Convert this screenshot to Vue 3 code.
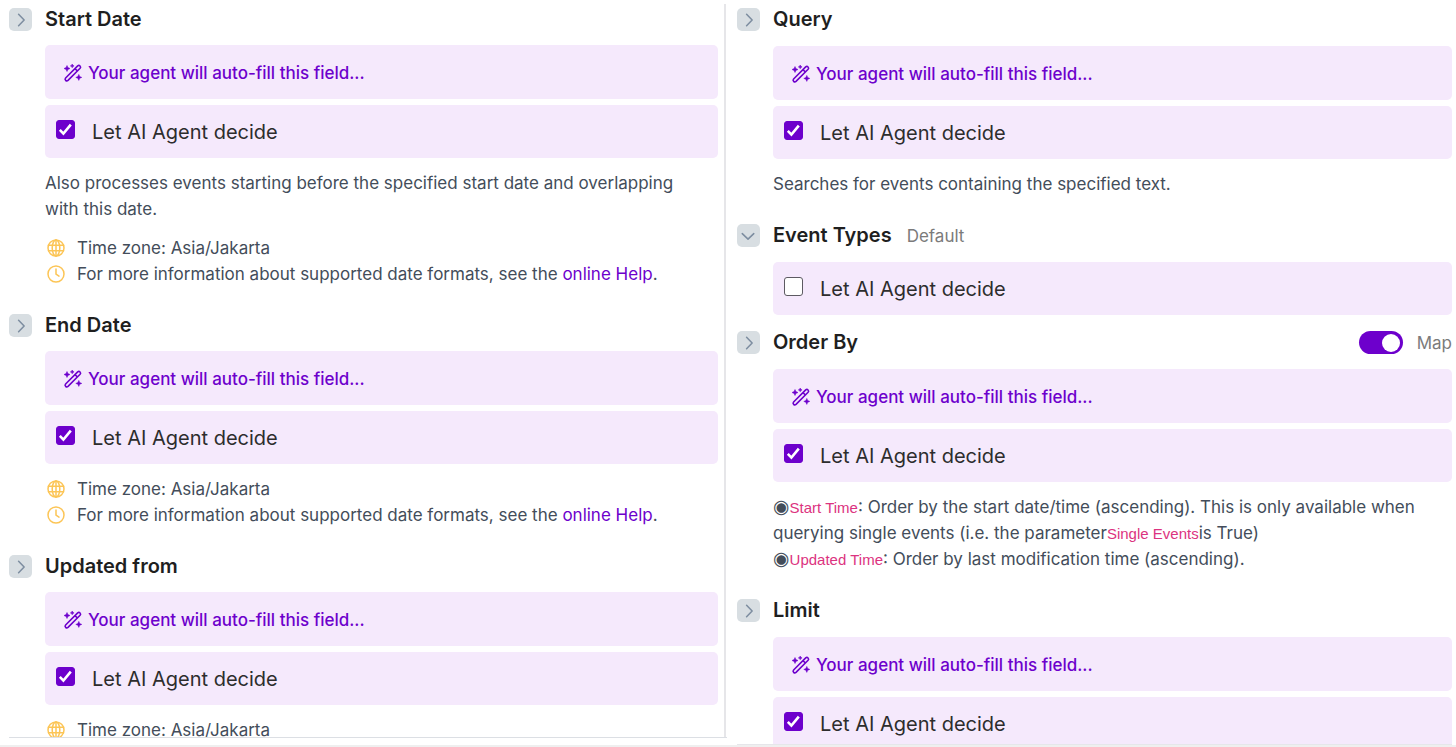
<template>
  <main class="page">
    <section v-for="column in columns" :key="column.id" :class="['column', `column-${column.id}`]">
      <div class="column-scroll">
        <article v-for="field in column.fields" :key="field.id" class="field">
          <header class="field-header">
            <button
              type="button"
              :class="['expander', { 'expander-open': field.open }]"
              :aria-label="`Toggle ${field.title}`"
              :aria-expanded="field.open"
              @click="field.open = !field.open"
            >
              <svg viewBox="0 0 24 24" aria-hidden="true">
                <path d="M10 6.5l5.8 6-5.8 6" />
              </svg>
            </button>
            <h2 class="field-title">{{ field.title }}</h2>
            <span v-if="field.badge" class="field-badge">{{ field.badge }}</span>
            <label v-if="field.mappable" class="map">
              <input v-model="field.mapped" type="checkbox" role="switch" class="switch" />
              <span>Map</span>
            </label>
          </header>

          <div class="field-body">
            <div v-if="field.agent" class="box autofill">
              <svg class="wand" viewBox="0 0 18 18" aria-hidden="true">
                <path
                  class="wand-stroke"
                  d="M1.600 14L13.700 1.900a1.700 1.700 0 0 1 2.400 2.400L4 16.400a1.700 1.700 0 0 1-2.400-2.400zM11 4.600l2.400 2.400"
                />
                <path
                  class="wand-spark"
                  d="M3 1.500l.9 2.100 2.100.9-2.100.9L3 7.500l-.9-2.100L0 4.500l2.100-.9zM8.200 0l.6 1.300 1.300.6-1.300.6-.6 1.300-.6-1.300-1.300-.6 1.300-.6zM14.800 10.400l.9 2.100 2.100.9-2.100.9-.9 2.100-.9-2.100-2.100-.9 2.100-.9z"
                />
              </svg>
              <span>Your agent will auto-fill this field...</span>
            </div>
            <label class="box decide">
              <input v-model="field.agent" type="checkbox" class="check" />
              <span>Let AI Agent decide</span>
            </label>

            <p v-if="field.help" class="help">{{ field.help }}</p>

            <ul v-if="field.dateHints" class="hints">
              <li>
                <svg viewBox="0 0 18 18" aria-hidden="true">
                  <circle cx="9" cy="9" r="8" />
                  <ellipse cx="9" cy="9" rx="3.8" ry="8" />
                  <path d="M1.5 6.3h15M1.5 11.7h15M9 1v16" />
                </svg>
                <span>Time zone: Asia/Jakarta</span>
              </li>
              <li>
                <svg viewBox="0 0 18 18" aria-hidden="true">
                  <circle cx="9" cy="9" r="8" />
                  <path d="M9 4v5.2l3 2" />
                </svg>
                <span>
                  For more information about supported date formats, see the
                  <a href="#help">online Help</a>.
                </span>
              </li>
            </ul>

            <p v-if="field.orderHelp" class="help">
              <span class="bullet">◉</span><code>Start Time</code>: Order by the start date/time
              (ascending). This is only available when querying single events (i.e. the
              parameter<code>Single Events</code>is True)<br />
              <span class="bullet">◉</span><code>Updated Time</code>: Order by last modification
              time (ascending).
            </p>
          </div>
        </article>
      </div>
    </section>
  </main>
</template>

<script setup>
import { reactive } from 'vue'

const columns = reactive([
  {
    id: 'dates',
    fields: [
      {
        id: 'start-date',
        title: 'Start Date',
        open: false,
        agent: true,
        help: 'Also processes events starting before the specified start date and overlapping with this date.',
        dateHints: true,
      },
      { id: 'end-date', title: 'End Date', open: false, agent: true, dateHints: true },
      { id: 'updated-from', title: 'Updated from', open: false, agent: true, dateHints: true },
    ],
  },
  {
    id: 'filters',
    fields: [
      {
        id: 'query',
        title: 'Query',
        open: false,
        agent: true,
        help: 'Searches for events containing the specified text.',
      },
      { id: 'event-types', title: 'Event Types', badge: 'Default', open: true, agent: false },
      {
        id: 'order-by',
        title: 'Order By',
        open: false,
        agent: true,
        mappable: true,
        mapped: true,
        orderHelp: true,
      },
      { id: 'limit', title: 'Limit', open: false, agent: true },
    ],
  },
])
</script>

<style>
body {
  margin: 0;
  background: #ffffff;
}
</style>

<style scoped>
.page {
  --purple: #6d00cc;
  --purple-soft: #f5e9fc;
  --text: #434d5a;
  box-sizing: border-box;
  display: grid;
  grid-template-columns: 1fr 1fr;
  height: 100vh;
  overflow: hidden;
  border-bottom: 2px solid #efefef;
  font-family: Inter, 'Liberation Sans', sans-serif;
  font-size: 17px;
  line-height: 26px;
  color: var(--text);
}

.column {
  display: flex;
  min-width: 0;
  min-height: 0;
}

.column-dates {
  margin: 4px 1px 7px 9px;
  border-bottom: 1px solid #dcdfe4;
}

.column-filters {
  margin: 4px 4px 0 9px;
  border-bottom: 1px solid #e6e6ea;
}

.column-scroll {
  flex: 1;
  min-width: 0;
  overflow: hidden;
  padding-top: 4px;
}

.column-dates .column-scroll {
  margin-right: 1px;
  padding-right: 6px;
  border-right: 2px solid #e6e6e9;
}

.field {
  margin-bottom: 27px;
}

.field:has(.decide:last-child) {
  margin-bottom: 16px;
}

.field-header {
  display: flex;
  align-items: center;
  height: 23px;
  margin-bottom: 14px;
}

.column-filters .field-header {
  margin-bottom: 15px;
}

.expander {
  display: flex;
  flex: none;
  width: 23px;
  height: 23px;
  margin: 0 13px 0 0;
  padding: 0;
  border: 0;
  border-radius: 5px;
  background: #d8dee2;
  cursor: pointer;
}

.expander svg {
  width: 23px;
  height: 23px;
  fill: none;
  stroke: #7d8da0;
  stroke-width: 1.6;
  stroke-linecap: round;
  stroke-linejoin: round;
}

.expander-open svg {
  transform: rotate(90deg);
}

.field-title {
  margin: 0;
  font-size: 20px;
  font-weight: 600;
  line-height: 23px;
  color: #1f1f1f;
}

.field-badge {
  margin-left: 15px;
  color: #7b7b7b;
}

.map {
  display: flex;
  align-items: center;
  gap: 14px;
  margin-left: auto;
  color: #7b7b7b;
}

.switch {
  appearance: none;
  display: flex;
  align-items: center;
  box-sizing: border-box;
  width: 44px;
  height: 23px;
  margin: 0;
  padding: 0 3px;
  border-radius: 12px;
  background: #b9bfc6;
  cursor: pointer;
}

.switch::before {
  content: '';
  width: 18px;
  height: 18px;
  border-radius: 50%;
  background: #ffffff;
}

.switch:checked {
  justify-content: flex-end;
  background: var(--purple);
}

.field-body {
  padding-left: 36px;
}

.box {
  display: flex;
  box-sizing: border-box;
  border-radius: 5px;
  background: var(--purple-soft);
}

.autofill {
  align-items: center;
  gap: 6px;
  height: 54px;
  margin-bottom: 6px;
  padding: 2px 19px 0;
  font-weight: 500;
  color: var(--purple);
}

.wand {
  flex: none;
  width: 18px;
  height: 18px;
  overflow: visible;
}

.wand-stroke {
  fill: none;
  stroke: var(--purple);
  stroke-width: 1.6;
  stroke-linejoin: round;
}

.wand-spark {
  fill: var(--purple);
  stroke: var(--purple);
  stroke-width: 0.5;
  stroke-linejoin: round;
}

.decide {
  gap: 17px;
  padding: 13px 11px 12px;
  font-size: 20px;
  line-height: 28px;
  color: #2d2d2d;
  cursor: pointer;
}

.check {
  appearance: none;
  flex: none;
  box-sizing: border-box;
  width: 19px;
  height: 19px;
  margin: 2px 0 0;
  border: 1px solid #5d5a62;
  border-radius: 3px;
  background: #ffffff;
  cursor: pointer;
}

.check:checked {
  border-color: var(--purple);
  background: var(--purple)
    url("data:image/svg+xml,%3Csvg xmlns='http://www.w3.org/2000/svg' viewBox='0 0 17 17'%3E%3Cpath d='M2.8 8.8l3.6 3.8L13.8 3.6' fill='none' stroke='white' stroke-width='2.6'/%3E%3C/svg%3E")
    center / 17px no-repeat;
}

.help {
  margin: 12px 0 0;
  padding-right: 20px;
}

.hints {
  margin: 12px 0 0;
  padding: 0;
  list-style: none;
}

.help + .hints {
  margin-top: 13px;
}

.hints li {
  display: flex;
  gap: 12px;
  padding-left: 2px;
}

.hints svg {
  flex: none;
  width: 18px;
  height: 18px;
  margin-top: 4px;
  fill: none;
  stroke: #fcc556;
  stroke-width: 1.5;
  stroke-linecap: round;
}

.hints a {
  color: var(--purple);
  text-decoration: none;
}

.bullet {
  font-family: 'DejaVu Sans', sans-serif;
  font-size: 19px;
  line-height: 1;
}

code {
  font-family: 'Liberation Sans', Arial, sans-serif;
  font-size: 15px;
  line-height: 1;
  color: #dc3380;
}
</style>
